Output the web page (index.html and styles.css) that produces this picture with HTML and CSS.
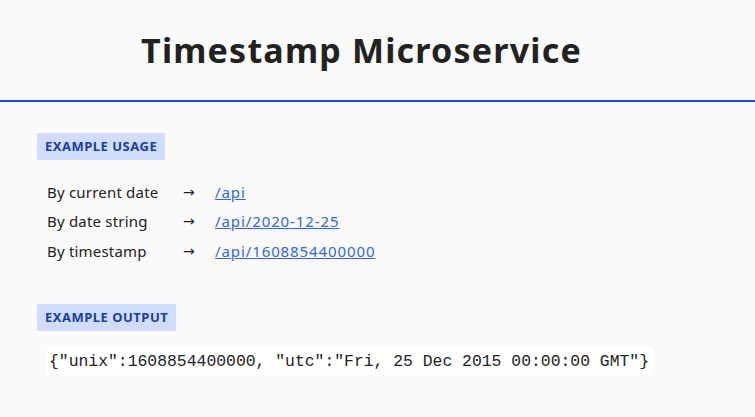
FILE: index.html
```html
<!DOCTYPE html>
<html lang="en">
<head>
<meta charset="utf-8">
<title>Timestamp Microservice</title>
<link rel="stylesheet" href="styles.css">
</head>
<body>
<header class="header">
  <h1 class="title">Timestamp Microservice</h1>
</header>
<main class="main">
  <section class="section">
    <h2 class="tag">Example Usage</h2>
    <ul class="rows">
      <li class="row"><span class="label">By current date</span><span class="arrow">→</span><a class="link" href="#">/api</a></li>
      <li class="row"><span class="label">By date string</span><span class="arrow">→</span><a class="link" href="#">/api/2020-12-25</a></li>
      <li class="row"><span class="label">By timestamp</span><span class="arrow">→</span><a class="link" href="#">/api/1608854400000</a></li>
    </ul>
  </section>
  <section class="section output">
    <h2 class="tag">Example Output</h2>
    <code class="code">{"unix":1608854400000, "utc":"Fri, 25 Dec 2015 00:00:00 GMT"}</code>
  </section>
</main>
</body>
</html>
```
FILE: styles.css
```css
* { box-sizing: border-box; }
html, body { margin: 0; padding: 0; }
body {
  background: #fafafa;
  font-family: "Noto Sans", "Open Sans", sans-serif;
  color: #222;
}
.header {
  height: 102px;
  border-bottom: 2px solid #1a4fd6;
  display: flex;
  justify-content: center;
  padding-top: 28px;
  padding-right: 32px;
}
.title {
  margin: 0;
  font-size: 34px;
  font-weight: 700;
  line-height: 44px;
  letter-spacing: 1.2px;
  color: #222;
}
.main {
  padding: 31px 37px 0;
}
.section { display: flex; flex-direction: column; align-items: flex-start; }
.tag {
  margin: 0;
  background: #d0dcfb;
  color: #1a3fa0;
  font-size: 13px;
  font-weight: 700;
  letter-spacing: 0.5px;
  text-transform: uppercase;
  padding: 0 8px;
  height: 27px;
  line-height: 27px;
}
.rows {
  list-style: none;
  margin: 17px 0 0;
  padding: 0 0 0 10px;
}
.row {
  display: grid;
  grid-template-columns: 136px 32px auto;
  height: 29.5px;
  align-items: center;
  font-size: 15px;
}
.label { letter-spacing: 0.2px; }
.arrow { font-family: "DejaVu Sans", sans-serif; font-size: 14px; }
.link { color: #3366e0; text-decoration: underline; letter-spacing: 0.9px; }
.output { margin-top: 38px; }
.code {
  margin: 17px 0 0 9px;
  background: #fff;
  font-family: "Liberation Mono", monospace;
  font-size: 16.4px;
  line-height: 27px;
  padding: 0 3px;
  color: #222;
}
```
